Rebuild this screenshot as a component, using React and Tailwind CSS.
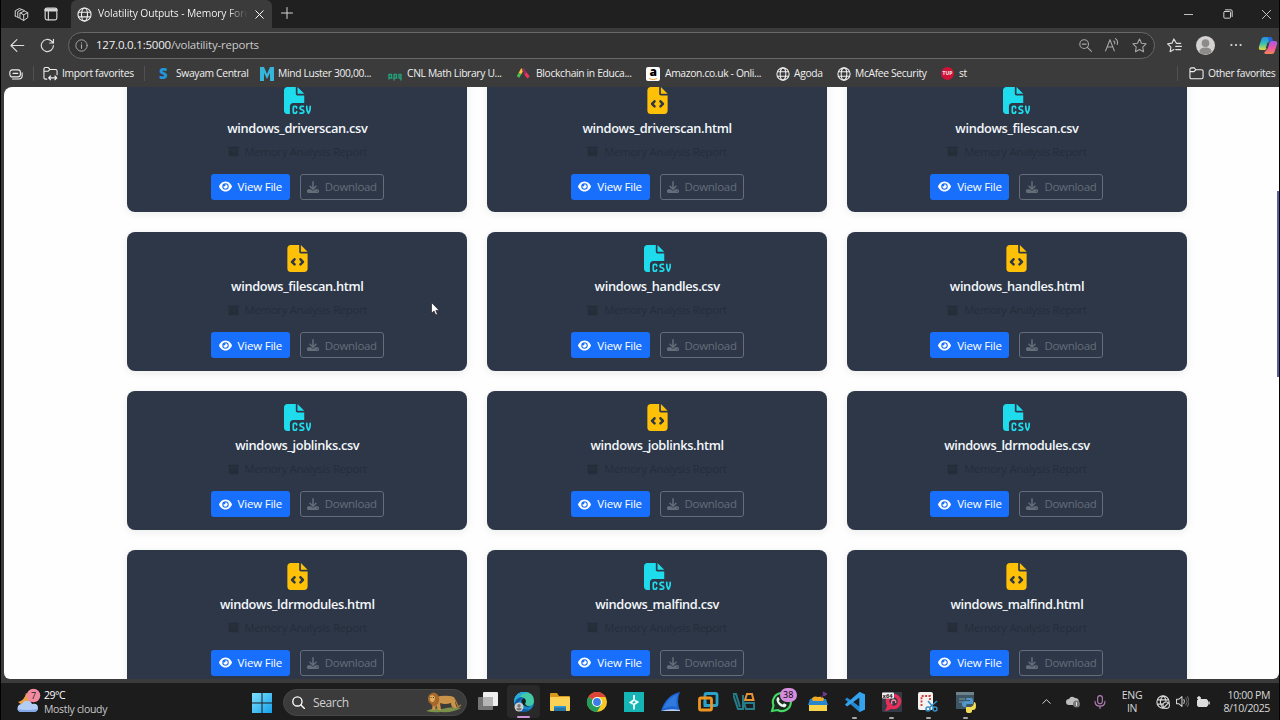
import { FaDownload, FaEye, FaFileCode, FaFileCsv, FaBoxArchive } from "react-icons/fa6";
import clsx from "clsx";

const reports = [
  "windows_driverscan.csv",
  "windows_driverscan.html",
  "windows_filescan.csv",
  "windows_filescan.html",
  "windows_handles.csv",
  "windows_handles.html",
  "windows_joblinks.csv",
  "windows_joblinks.html",
  "windows_ldrmodules.csv",
  "windows_ldrmodules.html",
  "windows_malfind.csv",
  "windows_malfind.html",
];

function Icon({ size = 16, className, children, box = "0 0 24 24", stroke = 1.8 }) {
  return (
    <svg
      width={size}
      height={size}
      viewBox={box}
      fill="none"
      stroke="currentColor"
      strokeWidth={stroke}
      strokeLinecap="round"
      strokeLinejoin="round"
      className={clsx("shrink-0", className)}
    >
      {children}
    </svg>
  );
}

function Globe({ size = 15, className }) {
  return (
    <Icon size={size} className={className} stroke={1.8}>
      <circle cx="12" cy="12" r="10.5" />
      <ellipse cx="12" cy="12" rx="4.8" ry="10.5" />
      <path d="M2.5 8.3h19M2.5 15.7h19" />
    </Icon>
  );
}

function TabStrip() {
  return (
    <div className="flex h-7 bg-[#202020] text-[#d4d4d4]">
      <div className="flex w-[71px] items-center gap-[15px] pl-[14px]">
        <Icon size={15} stroke={1.6}>
          <path d="M10 9.500l6.500-3 5.500 2.500v8l-6.500 4.500L10 18.500zM10 9.500l5.500 3L22 9M15.500 12.500v9" />
          <path d="M6 16.500V7.500L12.500 4l4 1.500M2 14.500V6L8.500 2.500l4 1.500M6 16.500l2 1M2 14.500l2 1" />
        </Icon>
        <Icon size={14} stroke={2}>
          <rect x="2" y="2" width="20" height="20" rx="3" />
          <path d="M3 5h18" strokeWidth="5" />
          <path d="M7.500 7v15" />
        </Icon>
      </div>
      <div className="flex w-[201px] items-center rounded-t-md bg-[#3b3b3b] pl-[6px]">
        <Globe className="text-[#eeeeee]" />
        <span className="ml-[6px] w-[150px] bg-linear-to-r from-white from-86% to-[#3b3b3b] bg-clip-text text-[10.3px] tracking-[-0.12px] whitespace-nowrap text-transparent">
          Volatility Outputs - Memory Foren
        </span>
        <Icon size={9} className="ml-[7px] text-white" stroke={2.6}>
          <path d="M2 2l20 20M22 2L2 22" />
        </Icon>
      </div>
      <Icon size={12} className="mt-[7px] ml-[9px]" stroke={2}>
        <path d="M12 1v22M1 12h22" />
      </Icon>
      <div className="ml-auto flex w-[95px] items-center justify-between pr-[8px]">
        <Icon size={9} stroke={2.4}>
          <path d="M0 12h24" />
        </Icon>
        <Icon size={10} stroke={2.4}>
          <rect x="2" y="6" width="16" height="16" rx="2" />
          <path d="M6 2h13q3 0 3 3v13" />
        </Icon>
        <Icon size={9} stroke={2.4}>
          <path d="M1 1l22 22M23 1L1 23" />
        </Icon>
      </div>
    </div>
  );
}

function Toolbar() {
  return (
    <div className="flex h-[34px] items-center bg-[#3b3b3b] text-[#dedede]">
      <Icon size={15} className="ml-[10px]" stroke={1.8}>
        <path d="M22 12H2M11 2.500L1.500 12l9.500 9.500" />
      </Icon>
      <Icon size={15} className="ml-[15px]" stroke={1.9}>
        <path d="M21.500 12a9.700 9.700 0 1 1-2.800-6.800L21.500 8M21.500 2v6h-6" />
      </Icon>
      <div className="ml-[13px] flex h-[27px] w-[1087px] shrink-0 items-center rounded-full border border-[#686868] bg-[#323232] pl-[6px] text-[#a8a8a8]">
        <Icon size={13} stroke={1.8}>
          <circle cx="12" cy="12" r="10.500" />
          <path d="M12 11v6M12 7v.3" strokeWidth="2.200" />
        </Icon>
        <span className="ml-[8px] text-[11.5px] tracking-[-0.21px] text-[#efefef]">
          127.0.0.1:5000<span className="text-[#c9c9c9]">/volatility-reports</span>
        </span>
        <div className="ml-auto flex items-center gap-[13px] pr-[7px]">
          <Icon size={13} stroke={2}>
            <circle cx="9.500" cy="9.500" r="8" />
            <path d="M6 9.500h7M15.500 15.500L23 23" />
          </Icon>
          <Icon size={14} stroke={1.9}>
            <path d="M1 22L8.500 3 16 22M3.500 15.500h10M15 5q2.500 1.500 1.500 5M18 1q5 3.500 3 10" />
          </Icon>
          <Icon size={15} stroke={1.7}>
            <path d="M12 1.500l3.200 6.800 7.300 1-5.300 5.200 1.300 7.400L12 18.300l-6.500 3.600 1.300-7.400L1.500 9.300l7.300-1z" />
          </Icon>
        </div>
      </div>
      <Icon size={15} className="ml-[12px]" stroke={1.9}>
        <path d="M22 8.500h-7L11 1.500 8 8.300l-7 1 5.200 5.200L5 22l6-3.500M14 13.500h9M14 18.500h8" />
      </Icon>
      <svg width="19" height="19" viewBox="0 0 20 20" className="ml-[14px] shrink-0">
        <circle cx="10" cy="10" r="10" fill="#d5d3d1" />
        <circle cx="10" cy="7.500" r="4" fill="#8d8b89" />
        <path d="M3.500 17q0-5 6.500-5t6.500 5Q10 22 3.500 17" fill="#8d8b89" />
      </svg>
      <svg width="12" height="4" viewBox="0 0 12 4" fill="currentColor" className="ml-[15px] shrink-0">
        <circle cx="1.400" cy="2" r="1.100" />
        <circle cx="6" cy="2" r="1.100" />
        <circle cx="10.600" cy="2" r="1.100" />
      </svg>
      <svg width="20" height="19" viewBox="0 0 20 19" className="ml-[16px] shrink-0">
        <defs>
          <linearGradient id="copL" x1="0" y1="0" x2="0" y2="1">
            <stop offset="0" stopColor="#258be8" />
            <stop offset=".5" stopColor="#35c0b5" />
            <stop offset="1" stopColor="#e8d83a" />
          </linearGradient>
          <linearGradient id="copR" x1="0" y1="0" x2="0" y2="1">
            <stop offset="0" stopColor="#a25bea" />
            <stop offset=".55" stopColor="#ee56a4" />
            <stop offset="1" stopColor="#f5874f" />
          </linearGradient>
        </defs>
        <path d="M6 1h6q2 0 1.500 2L11 5.500 9 12q-.7 2-2.500 2H3Q0 14 1 10.500L3.500 3Q4 1 6 1" fill="url(#copL)" />
        <path d="M14 18H8q-2 0-1.500-2L9 13.500 11 7q.7-2 2.500-2H17q3 0 2 3.500L16.500 16q-.5 2-2.500 2" fill="url(#copR)" />
        <path d="M10 1h2.500q2 0 2.500 4h-2q-1.500 0-2 2z" fill="#2365d4" />
        <path d="M9.500 6.500h2l-1.800 6h-2z" fill="#3b3b3b" />
      </svg>
    </div>
  );
}

function FolderIcon({ arrows }) {
  return (
    <Icon size={15} stroke={1.700}>
      {arrows ? (
        <path d="M6 21H4q-2.500 0-2.500-2.500V5Q1.500 2.500 4 2.500h4.500L11 5.500h9Q22.500 5.500 22.500 8v6M1.500 8.500H8l3-3M9 19h13M12 16l-3 3 3 3M19 16l3 3-3 3" />
      ) : (
        <path d="M1.500 5.500Q1.500 3 4 3h4.500L11 6h9q2.500 0 2.500 2.500V18q0 2.500-2.500 2.500H4Q1.500 20.500 1.500 18zM1.500 9H8l3-3" />
      )}
    </Icon>
  );
}

function Bookmark({ icon, label, className, gap = "gap-[6px]" }) {
  return (
    <div className={clsx("flex shrink-0 items-center whitespace-nowrap", gap, className)}>
      {icon}
      <span>{label}</span>
    </div>
  );
}

function BookmarksBar() {
  return (
    <div className="flex h-[25px] items-center bg-[#3b3b3b] pb-[2px] pl-[9px] text-[10.3px] tracking-[-0.34px] text-[#f0f0f0]">
      <Icon size={14} stroke={1.900} className="mr-[10px]">
        <rect x="1.500" y="5" width="18" height="12" rx="4" />
        <path d="M7 11h8M6 20.500h11q5.500 0 5.500-5.500V10" />
      </Icon>
      <div className="h-[15px] w-px bg-[#505050]" />
      <Bookmark className="ml-[9px] w-[101px]" gap="gap-[4px]" icon={<FolderIcon arrows />} label="Import favorites" />
      <div className="h-[15px] w-px bg-[#505050]" />
      <Bookmark
        className="ml-[14px] w-[101px]"
        icon={<b className="w-[11px] text-[15px] leading-none font-extrabold text-[#2295dc]">S</b>}
        label="Swayam Central"
      />
      <Bookmark
        className="w-[128px]"
        gap="gap-[4px]"
        icon={
          <svg width="14" height="14" viewBox="0 0 14 14" className="shrink-0">
            <path d="M0 0h4l3 7 3-7h4v14h-4V6l-3 6-3-6v8H0z" fill="#36b5dc" />
          </svg>
        }
        label="Mind Luster 300,00..."
      />
      <Bookmark
        className="w-[129px]"
        gap="gap-[5px]"
        icon={
          <Icon size={14} box="0 0 14 14" stroke={1.400} className="text-[#21a179]">
            <path d="M1 12V7.500M3.500 11V7.500H1M6 13V7.500h2.500V11M11 11V7.500h2V13M4 11H1M8.500 11H6M13 11h-2" />
          </Icon>
        }
        label="CNL Math Library U..."
      />
      <Bookmark
        className="w-[129px]"
        icon={
          <svg width="13" height="13" viewBox="0 0 13 13" fill="none" strokeWidth="3" className="shrink-0">
            <path d="M1 10l2-3.500" stroke="#46bd5a" />
            <path d="M3 6.500L5.500 2" stroke="#f4ca28" />
            <path d="M6 2l3 5" stroke="#8b2b68" />
            <path d="M8.500 6.500l3 4" stroke="#ec355c" />
          </svg>
        }
        label="Blockchain in Educa..."
      />
      <Bookmark
        className="w-[130px]"
        gap="gap-[5px]"
        icon={
          <span className="flex size-[14px] flex-col items-center rounded-xs bg-white text-black">
            <b className="h-[11px] text-[12px] leading-[9px] font-extrabold">a</b>
            <svg width="10" height="3" viewBox="0 0 10 3">
              <path d="M1 .5q4 2.500 8 0" fill="none" stroke="#f0a030" />
            </svg>
          </span>
        }
        label="Amazon.co.uk - Onli..."
      />
      <Bookmark className="w-[61px]" gap="gap-[4px]" icon={<Globe size={14} />} label="Agoda" />
      <Bookmark className="w-[104px]" gap="gap-[4px]" icon={<Globe size={14} />} label="McAfee Security" />
      <Bookmark
        gap="gap-[5px]"
        icon={
          <span className="flex size-[13px] items-center justify-center rounded-full bg-[#cf1238] text-[5px] font-bold tracking-normal">
            TUP
          </span>
        }
        label="st"
      />
      <div className="ml-auto h-[15px] w-px bg-[#505050]" />
      <Bookmark className="ml-[11px] w-[90px]" gap="gap-[4px]" icon={<FolderIcon />} label="Other favorites" />
    </div>
  );
}

function ReportCard({ name }) {
  const isCsv = name.endsWith(".csv");

  return (
    <div className="flex h-[138.6px] flex-col items-center rounded-lg bg-[#2d3748] pt-[13px] shadow-[0_2px_8px_rgba(0,20,40,0.08)]">
      {isCsv ? (
        <FaFileCsv size={27} className="text-[#1edcec]" />
      ) : (
        <FaFileCode size={27} className="text-[#ffc107]" />
      )}
      <h5 className="mt-[5px] text-[12.8px] leading-[18px] font-semibold tracking-[-0.35px] text-[#f4f7fb]">{name}</h5>
      <p className="mt-[7px] flex items-center gap-[6px] text-[11.3px] leading-4 tracking-[-0.25px] text-[#252d39]">
        <FaBoxArchive size={11} />
        Memory Analysis Report
      </p>
      <div className="mt-[14px] flex gap-[10px]">
        <button className="flex h-[26px] w-[79px] items-center justify-center gap-[6px] rounded-[3px] bg-[#176ffb] text-[11.5px] tracking-[-0.2px] text-white">
          <FaEye size={13} />
          View File
        </button>
        <button className="flex h-[26px] w-[84px] items-center justify-center gap-[6px] rounded-[3px] border border-[#646d79] text-[11.5px] tracking-[-0.3px] text-[#646d79]">
          <FaDownload size={12} />
          Download
        </button>
      </div>
    </div>
  );
}

function Weather() {
  return (
    <div className="flex w-[252px] items-center pl-[17px] text-[10.5px] leading-[14px]">
      <svg width="24" height="27" viewBox="0 0 24 27" className="shrink-0">
        <path d="M9 5q-1 7-8 9 5 5 11 2l4-6z" fill="#eea045" />
        <path d="M5 24q-5 0-4.500-4T5 16q2-4 6-3 3 0 4 3 6-1 6 4 0 4-5 4z" fill="#b4cdf5" />
        <path d="M5 24q-4 0-4.500-3 9 2 20.500 0-1 3-5 3z" fill="#82a8e8" />
        <circle cx="16.500" cy="7.500" r="6.800" fill="#f28ba2" />
        <text x="16.500" y="11" textAnchor="middle" fontSize="9" fill="#222" fontFamily="Open Sans">7</text>
      </svg>
      <div className="ml-[3px]">
        <div className="tracking-[-0.5px] text-white">29°C</div>
        <div className="tracking-[-0.32px] text-[#c9c9c9]">Mostly cloudy</div>
      </div>
    </div>
  );
}

function Lion() {
  return (
    <svg width="36" height="21" viewBox="0 0 36 21" className="shrink-0">
      <path d="M0 19q8-4 16-2 10-3 19-1-8 5-20 4-8 1-15-1" fill="#7b9149" />
      <path d="M9 5q9-2 15-1 6 0 5 6 1 4 2 6h-3q-3-1-3-5-6 2-11 0l1 7h-3l-2-5-1 5H6l1-8z" fill="#c99349" />
      <path d="M28 6q3 5 4 9l3-2" fill="none" stroke="#b5823d" strokeWidth="1.200" />
      <path d="M3 3q5-5 9 0 3 6-1 10-4 3-6-1-5-3-2-9" fill="#a8682c" />
      <path d="M4 4q3-2 5 1 0 4-2 5-4 0-3-6" fill="#e1ae5e" />
      <circle cx="5" cy="5.500" r=".6" fill="#3b2614" />
      <circle cx="7.500" cy="5.500" r=".6" fill="#3b2614" />
    </svg>
  );
}

const apps = [
  {
    name: "tasks",
    art: (
      <>
        <rect x="7" y="1" width="15" height="14" rx="1" fill="#eeeeee" />
        <rect x="2" y="6" width="15" height="13" rx="1" fill="#747474" />
        <path d="M7 6h10v9H7z" fill="#b5b5b5" />
      </>
    ),
  },
  {
    name: "edge",
    active: true,
    art: (
      <>
        <circle cx="11" cy="11" r="10" fill="#1588ca" />
        <path d="M1.200 9Q3 1 11 1q10 0 10 9 0 5-6 5-3 0-3-2 2-4-1-6Q5 4 1.200 9" fill="#43c9a3" />
        <path d="M1.200 9Q3 1 11 1q3 0 5 1Q8 1 6 8L1 12z" fill="#28a9dc" />
        <path d="M10 7q-6 3-3 8 4 5 10 3-6 6-12 1-5-5-2-10 4-4 7-2" fill="#0c59a4" />
        <path d="M12 13q2-4-1-6-4 2-2 5 2 4 8 4-4-1-5-3" fill="#1c1c1c" />
        <circle cx="6" cy="16" r="4.500" fill="#cccccc" />
        <circle cx="6" cy="14.800" r="1.700" fill="#777" />
        <path d="M3 18q3-3 6 0-3 3-6 0" fill="#777" />
      </>
    ),
  },
  {
    name: "explorer",
    art: (
      <>
        <path d="M1 3q0-1 1-1h6l2 3h10q1 0 1 1v3H1z" fill="#d99a1c" />
        <rect x="1" y="6" width="20" height="14" rx="1" fill="#fbd255" />
        <path d="M5 20v-4q0-1 1-1h10q1 0 1 1v4z" fill="#2374a9" />
        <path d="M5 15h12v1.500H5z" fill="#369dd3" />
      </>
    ),
  },
  {
    name: "chrome",
    art: (
      <>
        <circle cx="11" cy="11" r="10" fill="#f8c924" />
        <path d="M11 11L2.300 6A10 10 0 0 1 19.700 6H11z" fill="#dc4437" />
        <path d="M2.300 6A10 10 0 0 0 11 21l4.300-7.500L11 11z" fill="#249d58" />
        <circle cx="11" cy="11" r="5" fill="#fff" />
        <circle cx="11" cy="11" r="3.900" fill="#397fe5" />
      </>
    ),
  },
  {
    name: "burp",
    art: (
      <>
        <path d="M1 1h20v20H1z" fill="#16b5b5" />
        <path d="M11 4v5l-3.500 2.500L10 13M12 9.500l2.500 1.500-3.500 2.500v5" fill="none" stroke="#eafafa" strokeWidth="1.900" />
      </>
    ),
  },
  {
    name: "wireshark",
    art: (
      <>
        <path d="M1 20Q6 4 20 1q-4 8 0 19z" fill="#1d63cf" />
        <path d="M3 18Q8 6 18 3q-3 6-1 13-8-2-14 2" fill="#3079df" />
        <path d="M1 20q9-3 19-1v1z" fill="#b9cff0" />
      </>
    ),
  },
  {
    name: "vmware",
    art: (
      <g fill="none" strokeWidth="2.800">
        <rect x="8" y="2.500" width="12" height="12" rx="1.500" stroke="#2aa2c9" />
        <rect x="2.500" y="7" width="12" height="12" rx="1.500" stroke="#ef951f" />
        <path d="M8 10V14.500h4" stroke="#2aa2c9" />
      </g>
    ),
  },
  {
    name: "vb",
    art: (
      <g fill="none" strokeWidth="2">
        <path d="M0 3h3l4 13M7 18h3V4M0 3l5 15h5" stroke="#247d89" />
        <path d="M12 9l2-6h5l1.500 6z" stroke="#e59435" />
        <path d="M10 9l3 9h8v-6h-9" stroke="#247d89" />
      </g>
    ),
  },
  {
    name: "whatsapp",
    badge: "38",
    art: (
      <>
        <path d="M2 20l1.500-5.500A9 9 0 1 1 7.500 19z" fill="#1b2b20" stroke="#43d963" strokeWidth="2.100" />
        <path d="M7 7q1-2 2 0l.7 2-1 1q1.500 2.500 4 3.500l1.300-1.300 2.500 1.300q0 3-3 2.800Q8 15 6.500 9.500 6.300 8 7 7" fill="#eaf7ec" />
      </>
    ),
  },
  {
    name: "sandbox",
    art: (
      <>
        <path d="M3 10q3-6 8-4 6-1 7 4z" fill="#efac22" />
        <path d="M5 9l3-2 2 2 3-3 2 3" stroke="#fff1b0" fill="none" />
        <path d="M3 8h16l2 6H1z" fill="#2a86cb" />
        <path d="M5 8q6-4 12 0l-1 2H6z" fill="#efac22" />
        <path d="M2 14h18v6H2z" fill="#f8d44a" />
        <path d="M14 7l3-4M16 1l4 2-3 2z" fill="#733a91" stroke="#733a91" />
      </>
    ),
  },
  {
    name: "vscode",
    running: true,
    art: (
      <>
        <path d="M15.500 1L21 3.500v15L15.500 21 1 8.500l2-2 12.500 9V1z" fill="#2587ce" />
        <path d="M15.500 21L21 18.500v-15L15.500 1 1 13.500l2 2 12.500-9z" fill="#34a4ee" />
      </>
    ),
  },
  {
    name: "debugger",
    running: true,
    art: (
      <>
        <rect x="1" y="1" width="20" height="20" rx="1" fill="#333c46" />
        <circle cx="12.500" cy="10.500" r="6" fill="none" stroke="#e62d58" strokeWidth="3.600" />
        <path d="M6.500 10q0 7-3 10 8 0 8-6.500" fill="#e62d58" />
        <path d="M11 13q-1.500-4 2-4 2.500.5 1.500 3" fill="none" stroke="#ff8aa3" strokeWidth="1.300" />
        <rect x="1" y="1.500" width="12" height="6" rx="1" fill="#efefef" />
        <text x="1.600" y="6.700" fontSize="5.800" fontWeight="700" fill="#222" fontFamily="Open Sans">x64</text>
      </>
    ),
  },
  {
    name: "snip",
    running: true,
    art: (
      <>
        <rect x="1" y="1" width="15" height="18" rx="2" fill="#f2f2f2" />
        <path d="M4.500 15V5H13v5" fill="none" stroke="#d13b38" strokeWidth="1.800" strokeDasharray="2 1.400" />
        <path d="M11 10l6 7M20 10l-8 7" stroke="#378fc6" strokeWidth="1.500" />
        <circle cx="11" cy="18" r="2" fill="none" stroke="#378fc6" strokeWidth="1.500" />
        <circle cx="18" cy="18" r="2" fill="none" stroke="#378fc6" strokeWidth="1.500" />
      </>
    ),
  },
  {
    name: "python",
    running: true,
    art: (
      <>
        <path d="M2 1h18v17H2z" fill="#3e5663" />
        <path d="M2 1h18v3H2z" fill="#6d818b" />
        <path d="M5 8h6M5 11h4" stroke="#7d9a9e" />
        <path d="M13 7h4q2 0 2 2v4h-6q-1 0-1 3h-2q-2 0-2-3t3-3h5V9h-4q0-2 1-2" fill="#5195cb" />
        <path d="M20 11q2 0 2 4t-3 4h-1v1q0 2-3 2t-3-2v-4h5q3-1 3-5" fill="#f5dc55" />
      </>
    ),
  },
];

function TaskbarApp({ app }) {
  return (
    <div className="relative flex w-[36.8px] shrink-0 items-center justify-center">
      {app.active && <div className="absolute h-[33px] w-[33px] rounded-sm bg-[#292929]" />}
      <svg width="22" height="22" viewBox="0 0 22 22" className="relative">
        {app.art}
      </svg>
      {app.active && <div className="absolute bottom-[2px] h-[2px] w-[13px] rounded-full bg-[#cf92d8]" />}
      {app.running && <div className="absolute bottom-[1px] h-[2px] w-[5px] rounded-full bg-[#a7a7a7]" />}
      {app.badge && (
        <span className="absolute top-[5px] right-[3px] flex h-[14px] w-[17px] items-center justify-center rounded-full bg-[#d58ddf] text-[9px] text-black">
          {app.badge}
        </span>
      )}
    </div>
  );
}

function Taskbar() {
  return (
    <div className="flex h-[37px] bg-[#1c1c1c] text-[#d9d9d9]">
      <Weather />
      <svg width="20" height="20" viewBox="0 0 20 20" className="mt-[10px] shrink-0">
        <defs>
          <linearGradient id="win" x1="0" y1="0" x2="1" y2="1">
            <stop offset="0" stopColor="#7fe0fb" />
            <stop offset="1" stopColor="#14a1ed" />
          </linearGradient>
        </defs>
        <path d="M0 0h9.500v9.500H0zM10.500 0H20v9.500h-9.500zM0 10.500h9.500V20H0zM10.500 10.500H20V20h-9.500z" fill="url(#win)" />
      </svg>
      <div className="mt-[6px] ml-[11px] flex h-[27px] w-[184px] shrink-0 items-center rounded-full border border-[#484848] bg-[#3b3b3b] pr-[4px] pl-[8px]">
        <Icon size={13} stroke={2.500} className="text-white">
          <circle cx="10" cy="10" r="8.500" />
          <path d="M16.500 16.500L23 23" />
        </Icon>
        <span className="ml-[8px] text-[12px] tracking-[-0.4px] text-[#d0d0d0]">Search</span>
        <span className="ml-auto">
          <Lion />
        </span>
      </div>
      <div className="ml-[1.500px] flex">
        {apps.map((app) => (
          <TaskbarApp key={app.name} app={app} />
        ))}
      </div>
      <div className="ml-auto flex shrink-0 items-center pr-[9px] text-[10.5px] leading-[13px]">
        <Icon size={9} stroke={2.600}>
          <path d="M2 17L12 7l10 10" />
        </Icon>
        <svg width="14" height="12" viewBox="0 0 14 12" className="ml-[15px]">
          <path d="M3 9q-3 0-3-3t3-3q2-4 6-1 4 0 4 4 0 3-3 3z" fill="#bdbdbd" />
          <circle cx="10.500" cy="8" r="3.500" fill="#777" />
          <path d="M10.500 6v4" stroke="#ddd" />
        </svg>
        <Icon size={14} stroke={1.900} className="ml-[13px] text-[#b77fba]">
          <rect x="8" y="1" width="8" height="14" rx="4" />
          <path d="M3.500 11q0 8 8.500 8t8.500-8M12 19v4" />
        </Icon>
        <div className="ml-[13px] w-[24px] text-center tracking-[-0.3px]">
          ENG
          <br />
          IN
        </div>
        <Icon size={14} stroke={1.900} className="ml-[12px]">
          <circle cx="12" cy="12" r="10.500" />
          <path d="M12 1.500q-9 10 0 21M12 1.500q5 3 5 9M2.500 8.300h19M2.500 15.700H12" />
          <circle cx="17.500" cy="17.500" r="5.500" fill="#1c1c1c" />
          <path d="M14 21l7-7" />
        </Icon>
        <Icon size={13} stroke={1.900} className="ml-[6px]">
          <path d="M1 8h4l6-5v18l-6-5H1zM14.500 8.500q2.500 3.500 0 7" />
          <path d="M18 5.500q5 6.500 0 13M21 3q6 9 0 18" stroke="#666" />
        </Icon>
        <svg width="14" height="12" viewBox="0 0 14 12" className="ml-[7px]">
          <rect x="1.500" y="3.500" width="10" height="7" rx="1.500" fill="#ddd" stroke="#ddd" />
          <path d="M13 5.500v3" stroke="#ddd" strokeWidth="1.500" />
          <path d="M3 0v5M1 2h4" stroke="#eee" strokeWidth="1.300" />
        </svg>
        <div className="w-[60px] text-right tracking-[-0.35px] whitespace-nowrap">
          10:00 PM
          <br />
          8/10/2025
        </div>
      </div>
    </div>
  );
}

function App() {
  return (
    <div className="relative flex h-[720px] w-[1280px] flex-col overflow-hidden border-r border-black bg-[#3b3b3b] font-['Open_Sans','Noto_Sans',sans-serif]">
      <TabStrip />
      <Toolbar />
      <BookmarksBar />
      <div className="ml-1 flex h-[592px] overflow-hidden rounded-tl-lg rounded-b-md bg-[#fefefe]">
        <main className="-mt-[13.200px] ml-[123.400px] grid w-[1059.500px] shrink-0 grid-cols-3 content-start gap-5">
          {reports.map((name) => (
            <ReportCard key={name} name={name} />
          ))}
        </main>
        <div className="mt-[104px] ml-auto h-[186px] w-[2px] bg-[#5c5c9c]" />
      </div>
      <div className="h-[4px] bg-[#3b3b3b]" />
      <Taskbar />
      <div className="absolute inset-y-0 left-0 w-px bg-black" />
      <svg width="9" height="14" viewBox="0 0 9 14" className="absolute top-[302px] left-[431px]">
        <path d="M.5.500v10.800l2.500-2.300 1.700 4 1.800-.8-1.700-3.800h3.400z" fill="#fff" stroke="#222" strokeWidth=".7" />
      </svg>
    </div>
  );
}

export default App;
